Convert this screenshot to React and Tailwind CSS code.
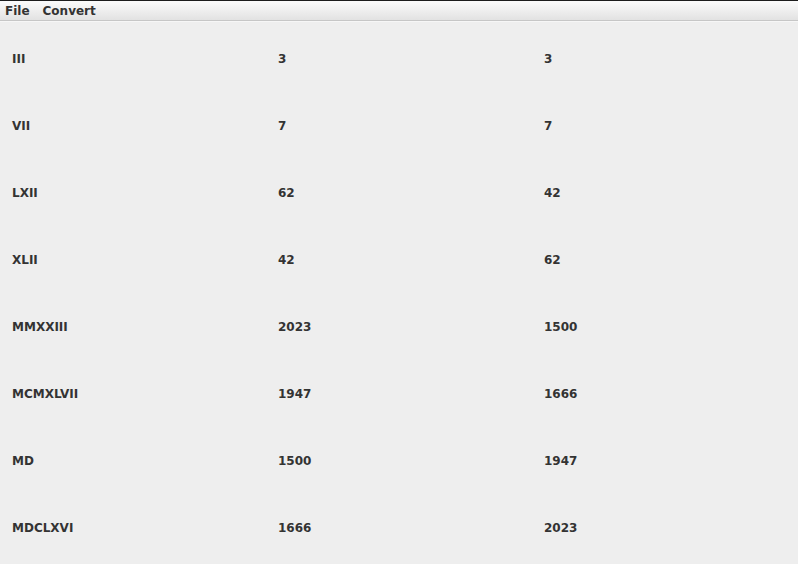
const rows = [
  ["III", "3", "3"],
  ["VII", "7", "7"],
  ["LXII", "62", "42"],
  ["XLII", "42", "62"],
  ["MMXXIII", "2023", "1500"],
  ["MCMXLVII", "1947", "1666"],
  ["MD", "1500", "1947"],
  ["MDCLXVI", "1666", "2023"],
]

const App = () => {
  return (
    <div className="w-[798px] h-[564px] overflow-hidden bg-[#eeeeee] text-[#333333] font-['DejaVu_Sans',sans-serif]">
      <div className="h-[20px] border-t border-[#1c1c1c] bg-gradient-to-b from-[#fbfbfb] to-[#e2e2e2] flex items-center text-[12px] font-bold">
        <span className="pl-[5px] pr-[13px]">File</span>
        <span>Convert</span>
      </div>
      <div className="h-px bg-[#c6c6c6]" />
      <div className="h-px bg-[#f6f6f6]" />
      <div className="pt-[3px] grid grid-cols-3 text-[12px] font-bold">
        {rows.map((r, i) =>
          r.map((c, j) => (
            <div key={i + "-" + j} className="h-[67px] flex items-center pl-[12px]">
              {c}
            </div>
          ))
        )}
      </div>
    </div>
  )
}

export default App
